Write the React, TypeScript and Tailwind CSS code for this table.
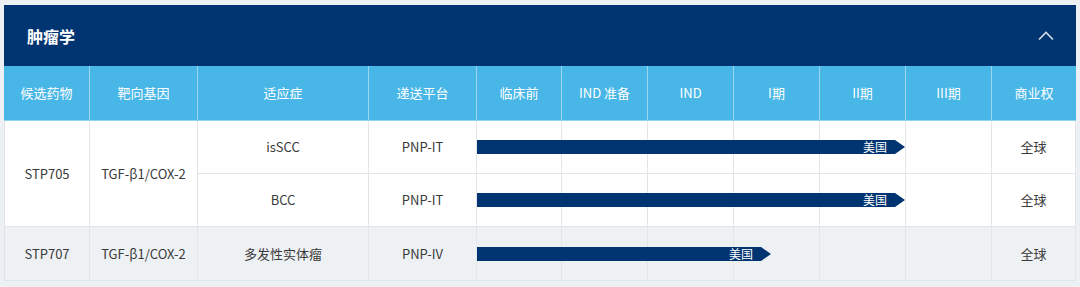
import React from "react";

const FONT = { fontFamily: '"Noto Sans CJK SC", "Noto Sans", sans-serif' };

const headers = ["候选药物", "靶向基因", "适应症", "递送平台", "临床前", "IND 准备", "IND", "I期", "II期", "III期", "商业权"];

function Bar({ width }: { width: number }) {
  return (
    <div
      className="absolute left-0 top-1/2 -translate-y-1/2 h-[14px] flex z-10"
      style={{ width }}
    >
      <div className="flex-1 bg-[#003571] flex items-center justify-end pr-[8px] text-[12px] leading-none text-white">
        美国
      </div>
      <svg width="10" height="14" viewBox="0 0 10 14" className="block shrink-0">
        <polygon points="0,0 10,7 0,14" fill="#003571" />
      </svg>
    </div>
  );
}

function Cell({
  children,
  className = "",
}: {
  children?: React.ReactNode;
  className?: string;
}) {
  return (
    <div
      className={
        "flex items-center justify-center border-r border-b border-[#e1e6eb] text-[13px] text-[#3a3a3a] " +
        className
      }
    >
      {children}
    </div>
  );
}

export default function App() {
  return (
    <div className="w-[1080px] h-[287px] bg-[#eef1f4] pt-[5px] px-[4px]" style={FONT}>
      <div className="w-[1072px]">
        <div className="h-[61px] bg-[#003571] flex items-center justify-between pl-[23px] pr-[22px]">
          <span className="text-white font-bold text-[16px]">肿瘤学</span>
          <svg width="16" height="10" viewBox="0 0 16 10">
            <polyline points="1,8.5 8,1.5 15,8.5" fill="none" stroke="#d3dae4" strokeWidth="1.7" />
          </svg>
        </div>
        <div className="grid grid-cols-[86px_108px_171px_108px_85px_86px_86px_86px_86px_86px_84px] bg-[#48b6e6] border-b border-[#8fd2f1]">
          {headers.map((h, i) => (
            <div
              key={h}
              className={
                "h-[54px] flex items-center justify-center text-white text-[13px] " +
                (i < headers.length - 1 ? "border-r border-[#9fd6ef]" : "")
              }
            >
              {h}
            </div>
          ))}
        </div>
        <div className="grid grid-cols-[85px_108px_171px_108px_85px_86px_86px_86px_86px_86px_84px] grid-rows-[53px_53px_54px] border-l border-[#dde3e8] bg-white">
          {/* row 1 */}
          <Cell className="row-span-2">STP705</Cell>
          <Cell className="row-span-2">TGF-β1/COX-2</Cell>
          <Cell>isSCC</Cell>
          <Cell>PNP-IT</Cell>
          <Cell className="relative">
            <Bar width={428} />
          </Cell>
          <Cell />
          <Cell />
          <Cell />
          <Cell />
          <Cell />
          <Cell>全球</Cell>
          {/* row 2 */}
          <Cell>BCC</Cell>
          <Cell>PNP-IT</Cell>
          <Cell className="relative">
            <Bar width={428} />
          </Cell>
          <Cell />
          <Cell />
          <Cell />
          <Cell />
          <Cell />
          <Cell>全球</Cell>
          {/* row 3 */}
          <Cell className="bg-[#eef1f4]">STP707</Cell>
          <Cell className="bg-[#eef1f4]">TGF-β1/COX-2</Cell>
          <Cell className="bg-[#eef1f4]">多发性实体瘤</Cell>
          <Cell className="bg-[#eef1f4]">PNP-IV</Cell>
          <Cell className="bg-[#eef1f4] relative">
            <Bar width={294} />
          </Cell>
          <Cell className="bg-[#eef1f4]" />
          <Cell className="bg-[#eef1f4]" />
          <Cell className="bg-[#eef1f4]" />
          <Cell className="bg-[#eef1f4]" />
          <Cell className="bg-[#eef1f4]" />
          <Cell className="bg-[#eef1f4]">全球</Cell>
        </div>
      </div>
    </div>
  );
}
